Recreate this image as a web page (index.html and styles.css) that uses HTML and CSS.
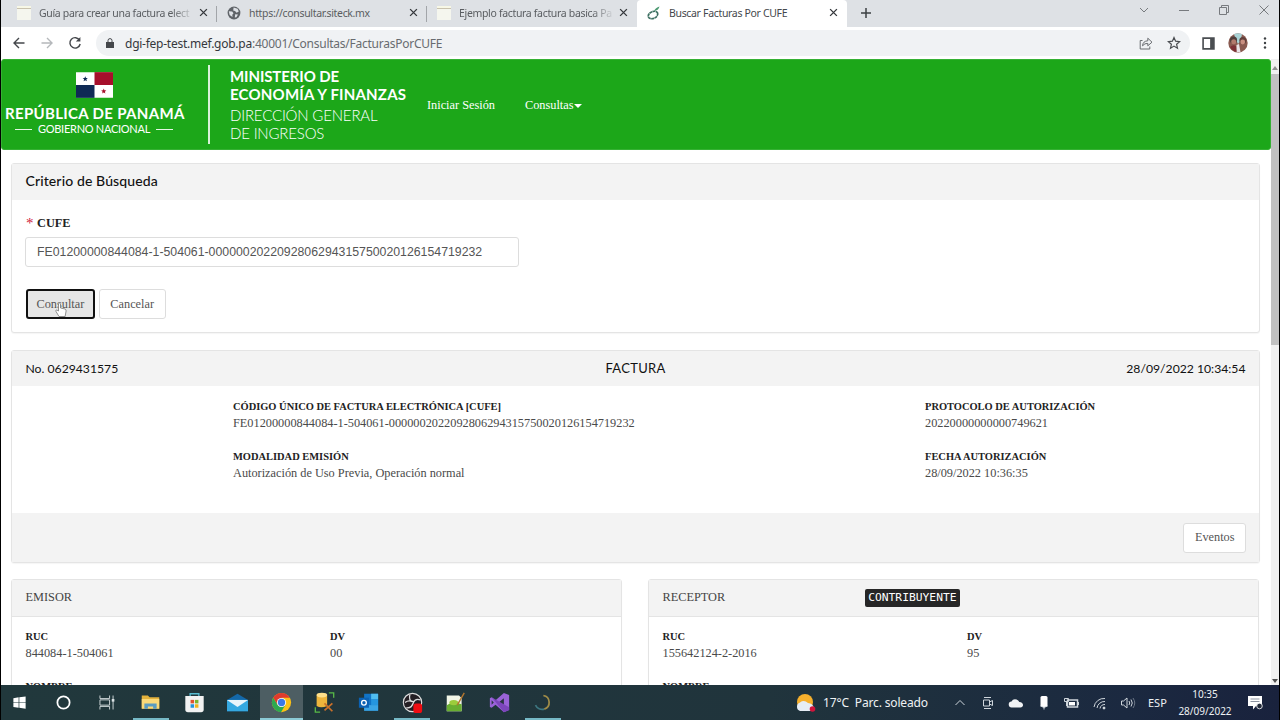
FILE: index.html
```html
<!DOCTYPE html>
<html lang="es">
<head>
    <meta charset="UTF-8">
    <meta name="viewport" content="width=device-width, initial-scale=1.0">
    <title>Buscar Facturas Por CUFE</title>
    <link rel="stylesheet" href="styles.css">
</head>
<body>
    <!-- Tabs -->
    <div class="tab-bar">
        <div class="tab">
            <span class="favicon page-icon"></span>
            <span class="tab-title fade">Guía para crear una factura elect</span>
            <svg class="close" viewBox="0 0 8 8"><path d="M1 1l6 6M7 1L1 7"/></svg>
        </div>
        <div class="tab">
            <svg class="favicon" viewBox="0 0 14 14"><circle cx="7" cy="7" r="6.4" fill="#5f6368"/><path d="M1.8 5.2l3.4.3 1.3 1.8-1.2 1.5.2 2.2L2.6 9z M6.6 1.6l4 1.2 1.2 2.7-2.2 1.2-1.6-1.6-1.8-.6z M8.2 8.2l2.8.4-1.6 2.6-1.6.4z" fill="#dee1e6"/></svg>
            <span class="tab-title">https://consultar.siteck.mx</span>
            <svg class="close" viewBox="0 0 8 8"><path d="M1 1l6 6M7 1L1 7"/></svg>
        </div>
        <div class="tab">
            <span class="favicon page-icon"></span>
            <span class="tab-title fade">Ejemplo factura factura basica Pa</span>
            <svg class="close" viewBox="0 0 8 8"><path d="M1 1l6 6M7 1L1 7"/></svg>
        </div>
        <div class="tab active">
            <svg class="favicon" viewBox="0 0 14 14" fill="none"><ellipse cx="6" cy="9" rx="5" ry="3.4" transform="rotate(-25 6 9)" stroke="#3d6f62" stroke-width="1.7" stroke-dasharray="3 .4"/><path d="M7 5Q8.500 1.500 12.500 .5Q11.500 4.500 7 5z" fill="#4c9a72"/></svg>
            <span class="tab-title">Buscar Facturas Por CUFE</span>
            <svg class="close" viewBox="0 0 8 8"><path d="M1 1l6 6M7 1L1 7"/></svg>
        </div>
        <svg class="new-tab" viewBox="0 0 12 12"><path d="M6 1v10M1 6h10"/></svg>
        <div class="window-buttons">
            <svg viewBox="0 0 12 12"><path d="M2 4l4 4 4-4"/></svg>
            <svg viewBox="0 0 12 12"><path d="M1 6.5h10"/></svg>
            <svg viewBox="0 0 12 12"><path d="M1.5 3.5h7v7h-7zM3.5 3.5v-2h7v7h-2"/></svg>
            <svg viewBox="0 0 12 12"><path d="M1.5 1.5l9 9M10.5 1.5l-9 9"/></svg>
        </div>
    </div>

    <!-- Address bar -->
    <div class="toolbar">
        <svg class="nav-icon" viewBox="0 0 14 14"><path d="M12.5 7H2M7 2L2 7l5 5"/></svg>
        <svg class="nav-icon disabled" viewBox="0 0 14 14"><path d="M1.5 7H12M7 2l5 5-5 5"/></svg>
        <svg class="nav-icon" viewBox="0 0 14 14"><path d="M11.6 4.2A5.2 5.2 0 1 0 12.2 8"/><path d="M12.4 1v4.6H7.8z" fill="#44474b" stroke="none"/></svg>
        <div class="address">
            <svg class="lock" viewBox="0 0 8 10"><path d="M0 4h8v6H0z" fill="#44474b"/><path d="M2 4.5V2.6a2 2 0 0 1 4 0v1.9" fill="none" stroke="#44474b"/></svg>
            <span class="url">dgi-fep-test.mef.gob.pa<span class="path">:40001/Consultas/FacturasPorCUFE</span></span>
            <svg class="share" viewBox="0 0 14 14"><path d="M3.500 4.500H1.200v8.500h9.600v-2.500M3.500 9.800Q4 5 8.800 4.800V2.200l4.200 4-4.200 3.600V7.400Q5.800 7 3.500 9.800z"/></svg>
            <svg class="star" viewBox="0 0 14 14"><path d="M7 1.500l1.600 3.700 4 .4-3 2.700.9 3.900L7 10.100l-3.500 2.100.9-3.900-3-2.700 4-.4z"/></svg>
        </div>
        <svg class="panel-icon" viewBox="0 0 12 12"><path d="M1 1h10v10H1z" fill="none" stroke="#4a4d51" stroke-width="1.5"/><path d="M7.5 1H11v10H7.5z" fill="#4a4d51"/></svg>
        <svg class="avatar" viewBox="0 0 20 20"><circle cx="10" cy="10" r="9.7" fill="#8a5a50"/><path d="M6 1.200a9.700 9.700 0 0 1 8 0L12.500 8l-2.500 3-2-4z" fill="#a9d3d6"/><circle cx="5.500" cy="7" r="3.600" fill="#503f3d"/><circle cx="5.700" cy="8.700" r="2.500" fill="#b27a6c"/><circle cx="14.800" cy="7.500" r="3.500" fill="#63403b"/><circle cx="14.700" cy="9" r="2.400" fill="#c98f80"/><path d="M8.500 12l2.500-1 1.500 8-4 .4z" fill="#e8e3e6"/><path d="M2 14q3-3 6-1l.5 6Q4 18 2 14z" fill="#7d3035"/></svg>
        <svg class="dots" viewBox="0 0 4 12"><circle cx="2" cy="1.500" r="1.200"/><circle cx="2" cy="6" r="1.200"/><circle cx="2" cy="10.500" r="1.200"/></svg>
    </div>

    <div class="viewport">
        <div class="page">
            <!-- Navbar -->
            <nav class="navbar">
                <div class="republica">
                    <svg class="flag" viewBox="0 0 36 25"><path d="M0 0h36v25H0z" fill="#fff"/><path d="M18 0h18v12.500H18z" fill="#a60f2b"/><path d="M0 12.500h18V25H0z" fill="#0f2a55"/><path d="M9 4l.7 1.700 1.800.1-1.400 1.200.5 1.800L9 7.800 7.400 8.800l.5-1.800L6.500 5.800l1.800-.1z" fill="#0f2a55"/><path d="M27 16l.7 1.700 1.800.1-1.400 1.200.5 1.800-1.600-1-1.600 1 .5-1.800-1.400-1.200 1.800-.1z" fill="#a60f2b"/></svg>
                    <div class="rep-name">REPÚBLICA DE PANAMÁ</div>
                    <div class="rep-gov"><span>GOBIERNO NACIONAL</span></div>
                </div>
                <div class="ministry">
                    <div class="min-bold">MINISTERIO DE</div>
                    <div class="min-bold wide">ECONOMÍA Y FINANZAS</div>
                    <div class="min-light first">DIRECCIÓN GENERAL</div>
                    <div class="min-light">DE INGRESOS</div>
                </div>
                <div class="menu">
                    <a>Iniciar Sesión</a>
                    <a class="consultas">Consultas<i class="caret"></i></a>
                </div>
            </nav>

            <!-- Search -->
            <section class="card search-card">
                <div class="card-header search-title">Criterio de Búsqueda</div>
                <div class="search-body">
                    <label for="cufe"><span class="required">*</span>CUFE</label>
                    <div class="input" id="cufe">FE01200000844084-1-504061-0000002022092806294315750020126154719232</div>
                    <div class="buttons">
                        <button class="btn focus">Consultar
                            <svg class="cursor" viewBox="0 0 12 15"><path d="M4 14.500L1 9.500Q.3 8 1.800 8L3.500 9V1.800Q4.500.4 5.500 1.800V6l4.500 1q1.300.5 1.100 2l-1 5.500z" fill="#fff" stroke="#777" stroke-width=".8"/></svg>
                        </button>
                        <button class="btn">Cancelar</button>
                    </div>
                </div>
            </section>

            <!-- Invoice -->
            <section class="card invoice-card">
                <div class="card-header invoice-header">
                    <span>No. 0629431575</span>
                    <span class="inv-type">FACTURA</span>
                    <span class="inv-date">28/09/2022 10:34:54</span>
                </div>
                <div class="invoice-body">
                    <div class="field"><b>CÓDIGO ÚNICO DE FACTURA ELECTRÓNICA [CUFE]</b><span>FE01200000844084-1-504061-0000002022092806294315750020126154719232</span></div>
                    <div class="field"><b>PROTOCOLO DE AUTORIZACIÓN</b><span>20220000000000749621</span></div>
                    <div class="field"><b>MODALIDAD EMISIÓN</b><span>Autorización de Uso Previa, Operación normal</span></div>
                    <div class="field"><b>FECHA AUTORIZACIÓN</b><span>28/09/2022 10:36:35</span></div>
                </div>
                <div class="invoice-footer"><button class="btn">Eventos</button></div>
            </section>

            <!-- Emisor / Receptor -->
            <div class="parties">
                <section class="card">
                    <div class="card-header party-header"><span>EMISOR</span></div>
                    <div class="party-body">
                        <div class="field"><b>RUC</b><span>844084-1-504061</span></div>
                        <div class="field"><b>DV</b><span>00</span></div>
                        <div class="field"><b>NOMBRE</b></div>
                    </div>
                </section>
                <section class="card">
                    <div class="card-header party-header"><span>RECEPTOR</span><span class="badge">CONTRIBUYENTE</span></div>
                    <div class="party-body">
                        <div class="field"><b>RUC</b><span>155642124-2-2016</span></div>
                        <div class="field"><b>DV</b><span>95</span></div>
                        <div class="field"><b>NOMBRE</b></div>
                    </div>
                </section>
            </div>
        </div>
        <div class="scrollbar"><i class="arrow up"></i><i class="thumb"></i><i class="arrow down"></i></div>
    </div>

    <!-- Taskbar -->
    <div class="taskbar">
        <div class="apps">
            <div class="app"><svg viewBox="0 0 24 24"><path d="M5 7l6-.9V11.600H5zM11.800 6L19 5v6.600h-7.200zM5 12.400h6v5.500L5 17zM11.800 12.400H19V19l-7.200-1z" fill="#fff"/></svg></div>
            <div class="app"><svg viewBox="0 0 24 24"><circle cx="12" cy="12" r="7" fill="none" stroke="#fff" stroke-width="2"/></svg></div>
            <div class="app"><svg viewBox="0 0 24 24" fill="none" stroke="#dce3e5"><path d="M4.500 4v3.500h11V4M4.500 20v-3.500h11V20M4.500 9h11v6h-11zM19.500 4v16"/><path d="M18 8h3v3h-3z" fill="#dce3e5" stroke="none"/></svg></div>
            <div class="app open"><svg viewBox="0 0 24 24"><path d="M2 4h7l2 2h11v13H2z" fill="#e3b23c"/><path d="M2 8h20v11H2z" fill="#fbd978"/><path d="M5 19v-6h14v6h-4v-2.500H9V19z" fill="#5a9bc0"/></svg></div>
            <div class="app"><svg viewBox="0 0 24 24"><path d="M7 5V2h10v3" fill="none" stroke="#58bcd0" stroke-width="1.500"/><path d="M1.500 4.500h21V20q0 3-3 3h-15q-3 0-3-3z" fill="#f2f2f2"/><path d="M7.500 9h4v4h-4z" fill="#e0532f"/><path d="M12.500 9h4v4h-4z" fill="#7cb52e"/><path d="M7.500 14h4v4h-4z" fill="#2494dc"/><path d="M12.500 14h4v4h-4z" fill="#f1b41e"/></svg></div>
            <div class="app"><svg viewBox="0 0 24 24"><path d="M0 9L12 2l12 7v13H0z" fill="#1468a8"/><path d="M0 9h24v13H0z" fill="#35a8e0"/><path d="M0 9h24L12 17z" fill="#e9f4fa"/></svg></div>
            <div class="app open current"><svg viewBox="0 0 24 24"><circle cx="12" cy="12" r="11" fill="#fbc116"/><path d="M2.500 6.500A11 11 0 0 1 21.500 6.500H12L7.500 14.600z" fill="#e03b2e"/><path d="M2.500 6.500A11 11 0 0 0 11.500 23L16.500 14.600 12 17.200 7.500 14.600z" fill="#2da94f"/><circle cx="12" cy="12" r="5.200" fill="#fff"/><circle cx="12" cy="12" r="4.200" fill="#3b78e7"/></svg></div>
            <div class="app"><svg viewBox="0 0 24 24"><path d="M3 3v13q5 3 12 0V3z" fill="#eeb53c"/><ellipse cx="9" cy="3.500" rx="6" ry="2.700" fill="#ffe08a"/><path d="M17 1h5.500v5.500M7 23H1.500v-5.500" fill="none" stroke="#58b947" stroke-width="1.500"/><path d="M12 21l9-8M12 13l9 9" stroke="#c9702a" stroke-width="2"/></svg></div>
            <div class="app"><svg viewBox="0 0 24 24"><path d="M7 2h16v19H7z" fill="#1174c6"/><path d="M15 2h8v6.500h-8z" fill="#50bdf0"/><path d="M15 8.500h8V15h-8z" fill="#2596df"/><path d="M7 15h16v6.500H7z" fill="#3aa5e5"/><path d="M1 6.500h11.500V18H1z" fill="#0b62b4"/><circle cx="6.800" cy="12.300" r="2.700" fill="none" stroke="#fff" stroke-width="1.500"/></svg></div>
            <div class="app open"><svg viewBox="0 0 24 24"><circle cx="12" cy="12" r="10.500" fill="#241f24" stroke="#ddd" stroke-width="1.300"/><path d="M9 3q-2 7 4 8M21 9q-6-2-8 3M5 18q6 1 8-6M3.500 12q4-3 8-1" stroke="#ddd" stroke-width="1.500" fill="none"/><rect x="13" y="13" width="10" height="11" rx="3" fill="#f00d12"/></svg></div>
            <div class="app"><svg viewBox="0 0 24 24"><path d="M2 4h14l3 3v15H2z" fill="#f2f6e8"/><path d="M2 15q7-5 17-1v8H2z" fill="#69ae31"/><ellipse cx="10" cy="12" rx="5" ry="3" fill="#9ccc3c"/><path d="M14 15l8-14" stroke="#b3762e" stroke-width="1.600"/></svg></div>
            <div class="app"><svg viewBox="0 0 24 24"><path d="M17 1l6 2.500v17L17 23 7.500 14.500 3 18l-2-1V7l2-1 4.500 3.500z" fill="#9a63d8"/><path d="M17 7v10l-6-5zM3 9.500v5L5.500 12z" fill="#2a3442"/><path d="M3 6l14 17 6-2.500v-3z" fill="#7c45bb"/></svg></div>
            <div class="app open"><svg viewBox="0 0 24 24" fill="none"><path d="M13 4a8 8 0 0 1 1 15.500" stroke="#a08c47" stroke-width="2"/><path d="M14 19.500A8.500 8.500 0 0 1 4 15" stroke="#3d7781" stroke-width="2"/></svg></div>
        </div>
        <div class="tray">
            <svg class="weather" viewBox="0 0 22 20"><circle cx="10" cy="9" r="8" fill="#f6b02d"/><path d="M5 18a4.500 4.500 0 0 1 0-8.500Q9 6.500 13 10q5 .5 6 5 0 3-3 3z" fill="#e6edf5"/><circle cx="17.500" cy="16" r="2.800" fill="#d0143c"/></svg>
            <span class="temp">17°C&nbsp; Parc. soleado</span>
            <svg class="tray-icon" viewBox="0 0 16 16"><path d="M3.500 10L8 5.500l4.500 4.500"/></svg>
            <svg class="tray-icon" viewBox="0 0 16 16"><path d="M3.500 5h6v6h-6zM9.500 7l3-1.500v5L9.500 9M4 2.500h7M4 13.500h7"/></svg>
            <svg class="tray-icon" viewBox="0 0 16 16"><path d="M4 12.500a3 3 0 0 1-.5-6Q5 3.500 8.500 4.500q2 .5 2.800 2.500 4 .5 3.700 3.500-.5 2-2.500 2z" fill="#f0f2f4" stroke="none"/></svg>
            <svg class="tray-icon" viewBox="0 0 16 16"><rect x="4.500" y="1" width="7" height="11" rx="1.500" fill="#fff" stroke="none"/><path d="M4.500 11q3.500 3 7 0M8 12v2.500"/></svg>
            <svg class="tray-icon" viewBox="0 0 16 16"><path d="M3.500 5h10v7h-10z" stroke-width="1.500"/><path d="M5 7h6v3.500H5z" fill="#fff" stroke="none"/><path d="M14.500 7v3M.5 3.500h4v3h-4zM2.500 6.500V11"/></svg>
            <svg class="tray-icon" viewBox="0 0 16 16"><path d="M2 12A10 10 0 0 1 13 3.500M5 13a7.500 7.500 0 0 1 8-6.500M8 13.500a5 5 0 0 1 5-4"/><circle cx="12" cy="13" r="1" fill="#fff"/></svg>
            <svg class="tray-icon" viewBox="0 0 16 16"><path d="M1.500 6h2L7 3v10L3.500 10h-2zM9 6q1.500 2 0 4M11 4.500q2.500 3.500 0 7"/><path d="M13 3q3.500 5 0 10" stroke="#6b7686"/></svg>
            <span class="lang">ESP</span>
            <div class="clock"><span>10:35</span><span>28/09/2022</span></div>
            <svg class="notes" viewBox="0 0 16 16"><path d="M1 1h14v10H9l-3 3.500V11H1z" fill="#fff"/><path d="M3.500 4h9M3.500 6.500h9" stroke="#8c93a0"/><circle cx="12.500" cy="11" r="2.800" fill="#222a3a" stroke="#fff" stroke-width=".8"/></svg>
        </div>
    </div>
</body>
</html>
```
FILE: styles.css
```css
* {
    box-sizing: border-box;
}

body {
    margin: 0;
    width: 1280px;
    height: 720px;
    overflow: hidden;
    display: flex;
    flex-direction: column;
    border-left: 1px solid #000;
    border-right: 1px solid #000;
    background: #fff;
    font-family: "Liberation Serif", serif;
    font-size: 12.3px;
    color: #4a4a4a;
}

svg {
    display: block;
    flex: none;
}

/* Tabs */
.tab-bar {
    flex: none;
    height: 27px;
    display: flex;
    align-items: center;
    padding-left: 6px;
    background: #dee1e5;
    font-family: "Noto Sans", sans-serif;
    font-size: 10.5px;
    letter-spacing: -0.33px;
    color: #5a5d61;
}

.tab {
    width: 210px;
    height: 27px;
    display: flex;
    align-items: center;
    padding: 0 0 2px 10px;
    background: linear-gradient(#a2a5a9, #a2a5a9) 100% 50% / 1px 16px no-repeat;
}

.tab:nth-child(3) {
    background: none;
}

.tab.active {
    background: #fff;
    border-radius: 4px 4px 0 0;
}

.favicon {
    width: 14px;
    height: 14px;
    margin-right: 8px;
}

.page-icon {
    flex: none;
    background: linear-gradient(#f7f7e6 2px, #c9c2ae 2px, #c9c2ae 3px, #f5f6ee 3px);
}

.tab-title {
    width: 156px;
    white-space: nowrap;
}

.fade {
    -webkit-mask-image: linear-gradient(90deg, #000 85%, transparent);
    mask-image: linear-gradient(90deg, #000 85%, transparent);
}

.active .tab-title {
    color: #45484c;
}

.close {
    width: 9px;
    height: 9px;
    margin-left: 4px;
    fill: none;
    stroke: #35383c;
    stroke-width: 1.2;
}

.new-tab {
    width: 12px;
    height: 12px;
    margin: -2px 0 0 13px;
    fill: none;
    stroke: #3c4043;
    stroke-width: 1.5;
}

.window-buttons {
    display: flex;
    gap: 28px;
    margin: -7px 9px 0 auto;
}

.window-buttons svg {
    width: 12px;
    height: 12px;
    fill: none;
    stroke: #777a7e;
}

/* Address bar */
.toolbar {
    flex: none;
    height: 32px;
    display: flex;
    align-items: center;
    padding: 0 12px 0 11px;
}

.nav-icon {
    width: 14px;
    height: 14px;
    margin-right: 14px;
    fill: none;
    stroke: #44474b;
    stroke-width: 1.4;
}

.nav-icon.disabled {
    stroke: #b5b8bb;
}

.address {
    flex: 1;
    height: 26px;
    display: flex;
    align-items: center;
    border-radius: 13px;
    background: #f0f2f4;
    padding: 0 9px 0 10px;
    font-family: "Noto Sans", sans-serif;
    font-size: 12px;
    letter-spacing: -0.25px;
    color: #35383c;
}

.lock {
    width: 8px;
    height: 10px;
    margin-right: 11px;
}

.path {
    color: #686c70;
}

.share {
    width: 14px;
    height: 14px;
    margin-left: auto;
    margin-right: 14px;
    fill: none;
    stroke: #6a6d71;
}

.star {
    width: 14px;
    height: 14px;
    fill: none;
    stroke: #4a4d51;
    stroke-width: 1.2;
}

.panel-icon {
    width: 13px;
    height: 13px;
    margin-left: 12px;
}

.avatar {
    width: 20px;
    height: 20px;
    margin-left: 13px;
}

.dots {
    width: 4px;
    height: 12px;
    margin-left: 15px;
    fill: #3c4043;
}

/* Page */
.viewport {
    flex: 1;
    min-height: 0;
    display: flex;
    overflow: hidden;
}

.page {
    width: 1270px;
    overflow: hidden;
}

.scrollbar {
    width: 8px;
    background: #f1f1f1;
    display: flex;
    flex-direction: column;
    align-items: center;
    padding: 7px 0 2px;
}

.thumb {
    width: 8px;
    height: 271px;
    margin-top: 4px;
    background: #c1c1c1;
}

.arrow {
    border: 3px solid transparent;
}

.arrow.up {
    border-top: none;
    border-bottom: 4px solid #909090;
}

.arrow.down {
    margin-top: auto;
    border-bottom: none;
    border-top: 4px solid #505050;
}

/* Navbar */
.navbar {
    height: 91px;
    display: flex;
    background: #1ca719;
    border-radius: 3px;
    border: 1px solid #35b133;
    color: #fff;
}

.republica {
    width: 206px;
    padding-top: 12px;
    font-family: Lato, sans-serif;
}

.flag {
    width: 37px;
    height: 26px;
    margin-left: 74px;
}

.rep-name {
    margin: 5px 0 0 3px;
    font-size: 15px;
    line-height: 20px;
    font-weight: 700;
    letter-spacing: 0.33px;
    white-space: nowrap;
}

.rep-gov {
    display: flex;
    align-items: center;
    width: 158px;
    margin-left: 13px;
    gap: 6px;
    font-size: 11px;
    line-height: 12px;
    letter-spacing: -0.27px;
    white-space: nowrap;
}

.rep-gov::before,
.rep-gov::after {
    content: "";
    flex: 1;
    height: 1px;
    background: #e6f6e6;
}

.ministry {
    width: 198px;
    height: 79px;
    margin-top: 5px;
    border-left: 2px solid #d8f2d8;
    padding: 2px 0 0 20px;
    font-family: Lato, sans-serif;
    font-size: 15px;
    line-height: 18px;
    white-space: nowrap;
}

.min-bold {
    font-weight: 700;
    letter-spacing: -0.1px;
}

.min-bold.wide {
    letter-spacing: 0.2px;
}

.min-light {
    font-weight: 300;
    letter-spacing: -0.18px;
}

.min-light.first {
    margin-top: 3px;
}

.menu {
    display: flex;
    align-items: center;
    gap: 30px;
    padding: 1px 0 0 21px;
}

.consultas {
    display: flex;
    align-items: center;
    gap: 1px;
}

.caret {
    border: 4px solid transparent;
    border-top-color: #fff;
    border-bottom: none;
    margin-top: 2px;
}

/* Cards */
.card {
    border: 1px solid #e4e4e4;
    border-radius: 3px;
    box-shadow: 0 1px 1px rgba(0, 0, 0, 0.04);
    background: #fff;
}

.card-header {
    height: 36px;
    display: flex;
    align-items: center;
    padding: 0 13.5px 2px;
    background: #f3f3f3;
    font-family: Lato, sans-serif;
    color: #111;
}

.search-card {
    width: 1249px;
    height: 170px;
    margin: 13px 0 0 10px;
}

.search-title {
    padding-bottom: 3px;
    font-size: 14px;
    font-weight: 500;
    letter-spacing: 0.12px;
}

.search-body {
    padding: 14px 13px 0;
}

label {
    display: flex;
    align-items: center;
    height: 18px;
    font-weight: bold;
    color: #222;
}

.required {
    width: 11px;
    margin-left: 1px;
    font-size: 15px;
    font-weight: normal;
    color: #d0213c;
}

.input {
    width: 494px;
    height: 30px;
    margin-top: 5px;
    padding: 0 11px;
    border: 1px solid #ddd;
    border-radius: 3px;
    font-family: "Liberation Sans", sans-serif;
    line-height: 28px;
    color: #555;
}

.buttons {
    display: flex;
    gap: 4px;
    margin: 22px 0 0 1px;
}

.btn {
    position: relative;
    height: 30px;
    padding: 0 10.5px;
    border: 1px solid #ddd;
    border-radius: 3px;
    background: #fff;
    font-family: "Liberation Serif", serif;
    font-size: 12.3px;
    color: #555;
}

.btn.focus {
    border: 2px solid #111;
    background: #e6e6e6;
    padding: 0 8.5px;
}

.cursor {
    position: absolute;
    left: 27px;
    top: 11px;
    width: 12px;
    height: 15px;
}

/* Invoice */
.invoice-card {
    width: 1249px;
    height: 213px;
    margin: 17px 0 0 10px;
}

.invoice-header {
    display: grid;
    grid-template-columns: 1fr auto 1fr;
    height: 35px;
    padding-bottom: 1px;
    font-size: 12.2px;
}

.inv-type {
    font-size: 13px;
    letter-spacing: 0.3px;
}

.inv-date {
    text-align: right;
}

.invoice-body {
    height: 127px;
    display: grid;
    grid-template-columns: 692px 1fr;
    grid-auto-rows: 50px;
    padding: 12px 0 0 221px;
}

.field {
    display: flex;
    flex-direction: column;
    align-items: flex-start;
    line-height: 17px;
    white-space: nowrap;
}

.field b {
    font-size: 10.45px;
    color: #222;
}

.invoice-footer {
    height: 49px;
    display: flex;
    justify-content: flex-end;
    align-items: center;
    padding-right: 13px;
    background: #f3f3f3;
}

/* Emisor / Receptor */
.parties {
    display: flex;
    gap: 26px;
    margin: 16px 0 0 10px;
}

.parties .card {
    width: 611px;
    height: 200px;
}

.party-header {
    height: 37px;
    border-bottom: 1px solid #e4e4e4;
    font-family: "Liberation Serif", serif;
    color: #444;
}

.badge {
    margin: 1px 0 0 140px;
    padding: 0 3px;
    border-radius: 2px;
    background: #262626;
    color: #fff;
    font-family: "DejaVu Sans Mono", monospace;
    font-size: 11.3px;
    line-height: 18px;
}

.party-body {
    display: grid;
    grid-template-columns: 304.5px 1fr;
    grid-auto-rows: 50px;
    padding: 11px 13.5px 0;
}

/* Taskbar */
.taskbar {
    flex: none;
    height: 35px;
    display: flex;
    align-items: center;
    background: linear-gradient(90deg, #21383c, #20343c 60%, #1b2940 88%, #19223d);
    font-family: "Noto Sans", sans-serif;
    color: #eef2f4;
}

.apps {
    display: flex;
    margin-left: -3px;
}

.app {
    width: 43.6px;
    height: 35px;
    display: flex;
    align-items: center;
    justify-content: center;
}

.app svg {
    width: 21px;
    height: 21px;
}

.app.open {
    background: linear-gradient(#76b9c6, #76b9c6) 50% 100% / 36px 2px no-repeat;
}

.app.current {
    background: linear-gradient(#8ccbd6, #8ccbd6) 0 100% / 100% 2px no-repeat #4d5e63;
}

.tray {
    margin-left: auto;
    display: flex;
    align-items: center;
    white-space: nowrap;
}

.weather {
    width: 22px;
    height: 20px;
    margin-right: 6px;
}

.temp {
    width: 129px;
    font-size: 12px;
    letter-spacing: -0.15px;
}

.tray-icon {
    width: 16px;
    height: 16px;
    margin-right: 12px;
    fill: none;
    stroke: #cfd6dc;
}

.lang {
    width: 30px;
    font-size: 11px;
}

.clock {
    width: 54px;
    display: flex;
    flex-direction: column;
    align-items: center;
    font-size: 10px;
    line-height: 17px;
}

.notes {
    width: 16px;
    height: 16px;
    margin: 0 16px 0 15px;
}
```
